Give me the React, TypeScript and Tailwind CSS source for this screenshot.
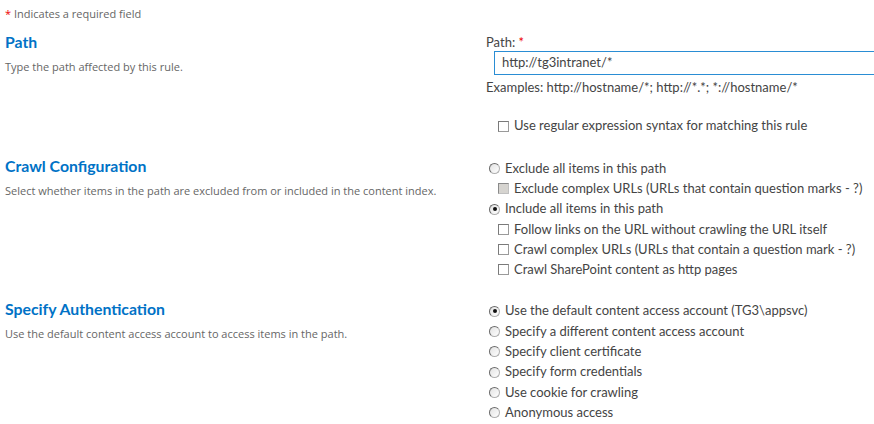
const font = { fontFamily: '"Open Sans", "Liberation Sans", sans-serif' };
const ctrlFont = { fontFamily: 'Lato, "Open Sans", sans-serif' };

function Radio({ checked }: { checked?: boolean }) {
  return (
    <span className="relative inline-block w-[11px] h-[11px] rounded-full border border-[#b0b0b0] border-t-[#6a6a6a] border-l-[#6a6a6a] bg-gradient-to-br from-[#e2e2e2] to-white shrink-0">
      {checked && <span className="absolute left-[2.5px] top-[2.5px] w-[4px] h-[4px] rounded-full bg-[#111]" />}
    </span>
  );
}

function Checkbox({ disabled }: { disabled?: boolean }) {
  return (
    <span
      className={
        disabled
          ? "inline-block w-[11px] h-[11px] border border-[#c0c0c0] border-t-[#8a8a8a] border-l-[#8a8a8a] bg-[#d6d4d0] shrink-0"
          : "inline-block w-[11px] h-[11px] border border-[#9a9a9a] border-t-[#7a7a7a] border-l-[#7a7a7a] bg-white shrink-0"
      }
    />
  );
}

function RadioRow({ label, checked }: { label: string; checked?: boolean }) {
  return (
    <div className="flex items-center h-[20.3px] pl-[3px] gap-[5px] whitespace-nowrap">
      <Radio checked={checked} />
      <span>{label}</span>
    </div>
  );
}

function CheckRow({ label, disabled }: { label: string; disabled?: boolean }) {
  return (
    <div className="flex items-center h-[20.3px] pl-[12px] gap-[5px] whitespace-nowrap">
      <Checkbox disabled={disabled} />
      <span>{label}</span>
    </div>
  );
}

function Section({ title, desc, children }: { title: string; desc: string; children: React.ReactNode }) {
  return (
    <div className="flex">
      <div className="w-[481px] shrink-0">
        <h3 style={ctrlFont} className="text-[15.8px] leading-[16px] font-bold text-[#0072c6]">
          {title}
        </h3>
        <p className="mt-[9px] text-[11px] text-[#666]">{desc}</p>
      </div>
      <div style={ctrlFont} className="flex-1 text-[13px] text-[#444]">
        {children}
      </div>
    </div>
  );
}

export default function App() {
  return (
    <div style={font} className="w-[874px] h-[424px] overflow-hidden bg-white pl-[5px] pt-[6px]">
      <p className="text-[11px] text-[#666] leading-[16px]">
        <span className="text-[#e00]">*</span> Indicates a required field
      </p>

      <div className="mt-[12px] flex flex-col">
        <Section title="Path" desc="Type the path affected by this rule.">
          <div className="leading-[16px]">
            Path: <span className="text-[#e00]">*</span>
          </div>
          <div className="ml-[8px] mt-[1px] h-[24px] border border-[#2a8dd4] pl-[7px] flex items-center -mr-[10px]">
            http://tg3intranet/*
          </div>
          <div className="mt-[3px] leading-[18px]">Examples: http://hostname/*; http://*.*; *://hostname/*</div>
          <div className="mt-[20px]">
            <CheckRow label="Use regular expression syntax for matching this rule" />
          </div>
        </Section>

        <div className="mt-[22px]">
          <Section
            title="Crawl Configuration"
            desc="Select whether items in the path are excluded from or included in the content index."
          >
            <RadioRow label="Exclude all items in this path" />
            <CheckRow label="Exclude complex URLs (URLs that contain question marks - ?)" disabled />
            <RadioRow label="Include all items in this path" checked />
            <CheckRow label="Follow links on the URL without crawling the URL itself" />
            <CheckRow label="Crawl complex URLs (URLs that contain a question mark - ?)" />
            <CheckRow label="Crawl SharePoint content as http pages" />
          </Section>
        </div>

        <div className="mt-[21px]">
          <Section
            title="Specify Authentication"
            desc="Use the default content access account to access items in the path."
          >
            <RadioRow label="Use the default content access account (TG3\appsvc)" checked />
            <RadioRow label="Specify a different content access account" />
            <RadioRow label="Specify client certificate" />
            <RadioRow label="Specify form credentials" />
            <RadioRow label="Use cookie for crawling" />
            <RadioRow label="Anonymous access" />
          </Section>
        </div>
      </div>
    </div>
  );
}
